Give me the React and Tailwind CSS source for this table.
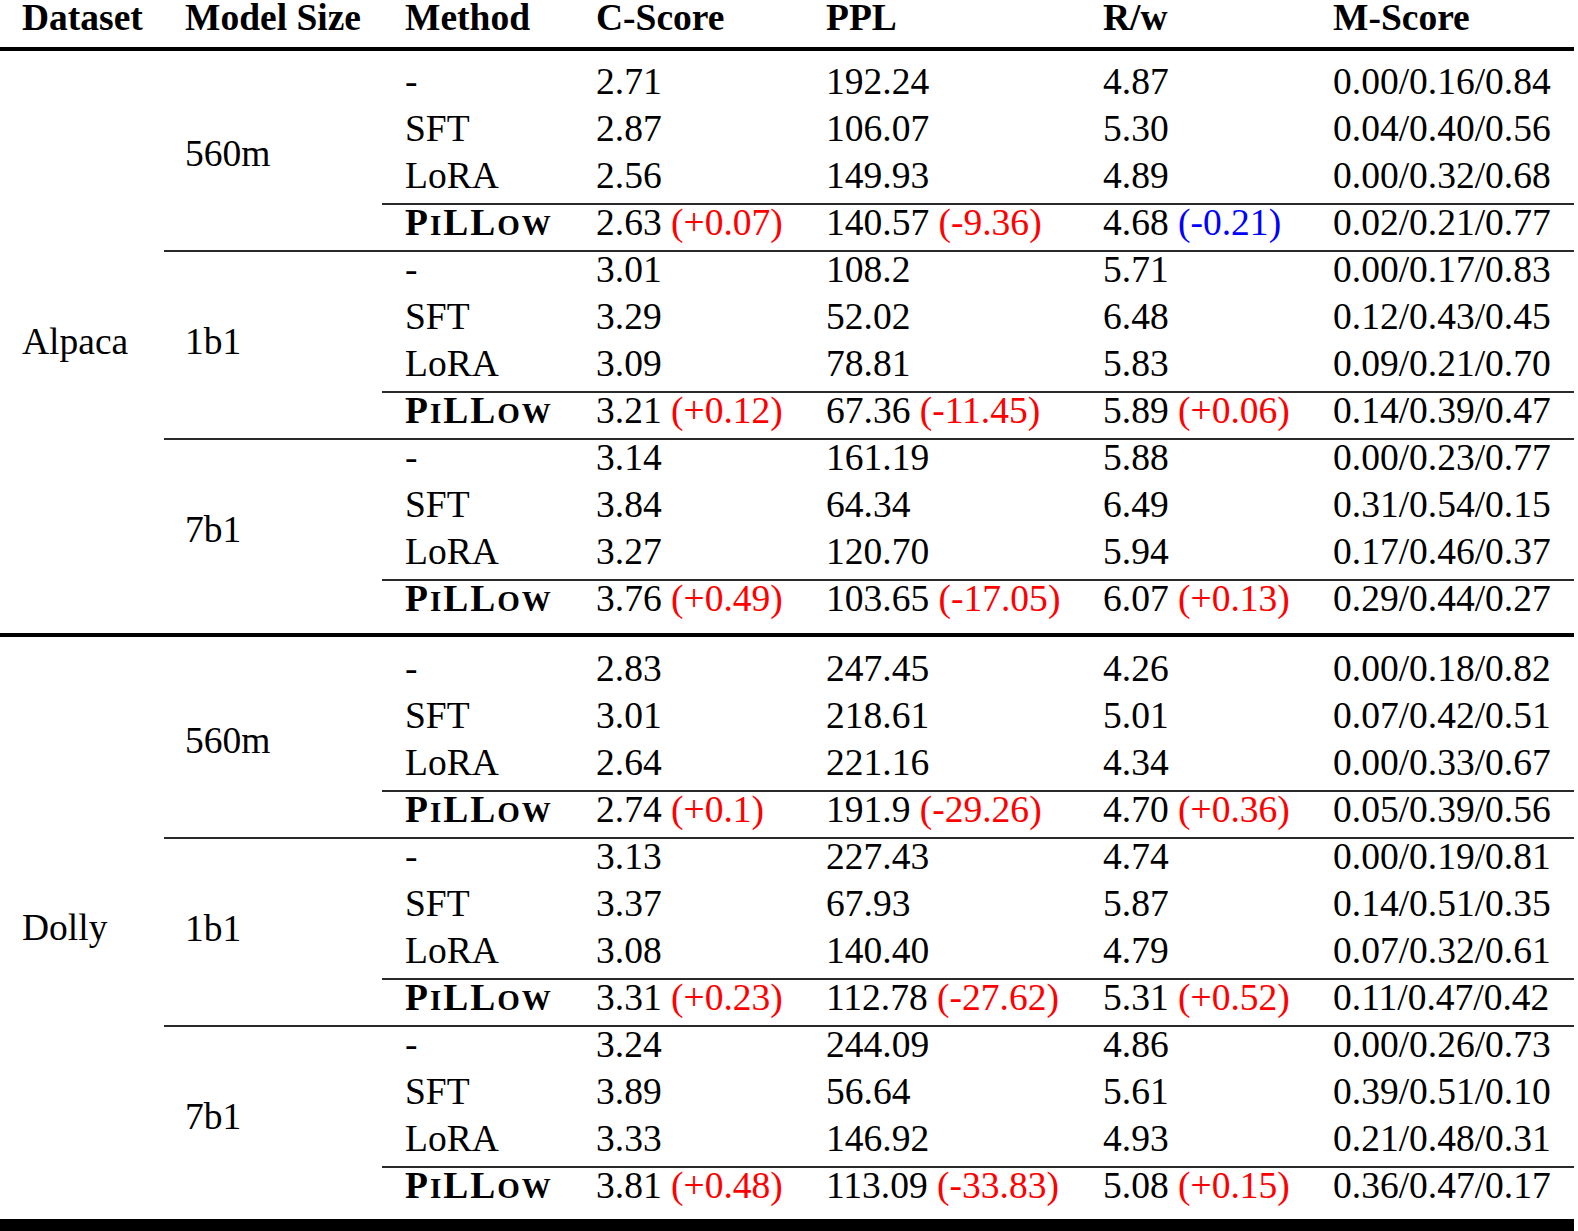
import React from "react";

const data = [
  {
    name: "Alpaca",
    groups: [
      {
        size: "560m",
        rows: [
          ["-", "2.71", "192.24", "4.87", "0.00/0.16/0.84"],
          ["SFT", "2.87", "106.07", "5.30", "0.04/0.40/0.56"],
          ["LoRA", "2.56", "149.93", "4.89", "0.00/0.32/0.68"],
        ],
        ours: [["2.63", "+0.07", "red"], ["140.57", "-9.36", "red"], ["4.68", "-0.21", "blue"], "0.02/0.21/0.77"],
      },
      {
        size: "1b1",
        rows: [
          ["-", "3.01", "108.2", "5.71", "0.00/0.17/0.83"],
          ["SFT", "3.29", "52.02", "6.48", "0.12/0.43/0.45"],
          ["LoRA", "3.09", "78.81", "5.83", "0.09/0.21/0.70"],
        ],
        ours: [["3.21", "+0.12", "red"], ["67.36", "-11.45", "red"], ["5.89", "+0.06", "red"], "0.14/0.39/0.47"],
      },
      {
        size: "7b1",
        rows: [
          ["-", "3.14", "161.19", "5.88", "0.00/0.23/0.77"],
          ["SFT", "3.84", "64.34", "6.49", "0.31/0.54/0.15"],
          ["LoRA", "3.27", "120.70", "5.94", "0.17/0.46/0.37"],
        ],
        ours: [["3.76", "+0.49", "red"], ["103.65", "-17.05", "red"], ["6.07", "+0.13", "red"], "0.29/0.44/0.27"],
      },
    ],
  },
  {
    name: "Dolly",
    groups: [
      {
        size: "560m",
        rows: [
          ["-", "2.83", "247.45", "4.26", "0.00/0.18/0.82"],
          ["SFT", "3.01", "218.61", "5.01", "0.07/0.42/0.51"],
          ["LoRA", "2.64", "221.16", "4.34", "0.00/0.33/0.67"],
        ],
        ours: [["2.74", "+0.1", "red"], ["191.9", "-29.26", "red"], ["4.70", "+0.36", "red"], "0.05/0.39/0.56"],
      },
      {
        size: "1b1",
        rows: [
          ["-", "3.13", "227.43", "4.74", "0.00/0.19/0.81"],
          ["SFT", "3.37", "67.93", "5.87", "0.14/0.51/0.35"],
          ["LoRA", "3.08", "140.40", "4.79", "0.07/0.32/0.61"],
        ],
        ours: [["3.31", "+0.23", "red"], ["112.78", "-27.62", "red"], ["5.31", "+0.52", "red"], "0.11/0.47/0.42"],
      },
      {
        size: "7b1",
        rows: [
          ["-", "3.24", "244.09", "4.86", "0.00/0.26/0.73"],
          ["SFT", "3.89", "56.64", "5.61", "0.39/0.51/0.10"],
          ["LoRA", "3.33", "146.92", "4.93", "0.21/0.48/0.31"],
        ],
        ours: [["3.81", "+0.48", "red"], ["113.09", "-33.83", "red"], ["5.08", "+0.15", "red"], "0.36/0.47/0.17"],
      },
    ],
  },
];

// column widths for Method / C-Score / PPL / R/w / M-Score
const cols = ["w-[192px]", "w-[230px]", "w-[277px]", "w-[230px]", "w-[263px]"];

const Delta = ({ cell }) => (
  <>
    {cell[0]}{" "}
    <span className={cell[2] === "blue" ? "text-[#0000ff]" : "text-[#ff0000]"}>({cell[1]})</span>
  </>
);

// small caps drawn by hand, the synthetic ones come out too small
const Pillow = () => (
  <span className="font-bold tracking-[2px]">
    P<span className="uppercase text-[29px]">i</span>LL<span className="uppercase text-[29px]">ow</span>
  </span>
);

const Row = ({ h, children }) => (
  <div className={`flex ${h} leading-[36px] whitespace-nowrap`}>
    {children.map((c, i) => (
      <div key={i} className={`${cols[i]} ${i === 0 ? "pl-[23px]" : "pl-[22px]"}`}>
        {c}
      </div>
    ))}
  </div>
);

const Group = ({ g, last }) => (
  <>
    <div className="flex">
      <div className="w-[218px] pl-[21px] flex items-center pb-[6px] leading-[36px]">{g.size}</div>
      <div className="w-[1192px]">
        <Row h="h-[47px]">{g.rows[0]}</Row>
        <Row h="h-[47px]">{g.rows[1]}</Row>
        <Row h="h-[45px]">{g.rows[2]}</Row>
        <div className="h-[2px] bg-[#2a2a2a]" />
        <Row h="h-[45px]">
          {[
            <Pillow />,
            <Delta cell={g.ours[0]} />,
            <Delta cell={g.ours[1]} />,
            <Delta cell={g.ours[2]} />,
            g.ours[3],
          ]}
        </Row>
      </div>
    </div>
    {!last && <div className="h-[2px] bg-[#2a2a2a]" />}
  </>
);

const Section = ({ s, pt, pb }) => (
  <div className="flex">
    <div className="w-[164px] pl-[22px] flex items-center leading-[36px]">{s.name}</div>
    <div className={`w-[1410px] ${pt} ${pb}`}>
      {s.groups.map((g, i) => (
        <Group key={g.size} g={g} last={i === s.groups.length - 1} />
      ))}
    </div>
  </div>
);

export default function App() {
  const heads = ["Method", "C-Score", "PPL", "R/w", "M-Score"];
  return (
    <div className="w-[1574px] h-[1231px] bg-white text-black text-[37.5px] font-['Liberation_Serif','Times_New_Roman',serif]">
      <div className="flex h-[47px] pt-[1px] font-bold leading-[33px] whitespace-nowrap">
        <div className="w-[164px] pl-[22px]">Dataset</div>
        <div className="w-[218px] pl-[21px]">Model Size</div>
        {heads.map((h, i) => (
          <div key={h} className={`${cols[i]} ${i === 0 ? "pl-[23px]" : "pl-[22px]"}`}>
            {h}
          </div>
        ))}
      </div>
      <div className="h-[4px] bg-black" />
      <Section s={data[0]} pt="pt-[13px]" pb="pb-[7px]" />
      <div className="h-[4px] bg-black" />
      <Section s={data[1]} pt="pt-[14px]" pb="pb-[6px]" />
      <div className="h-[12px] bg-black" />
    </div>
  );
}
